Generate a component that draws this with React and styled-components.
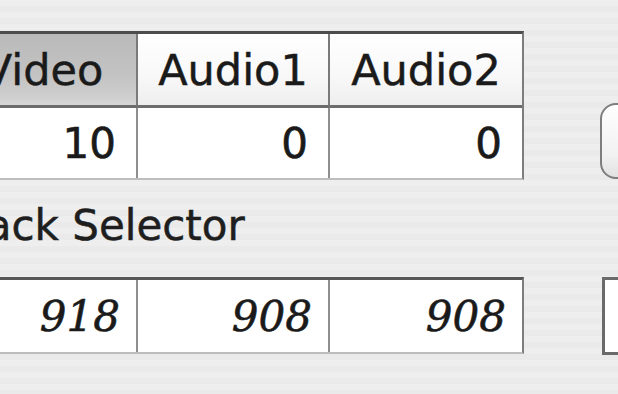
import React from "react";
import styled, { createGlobalStyle } from "styled-components";

const Global = createGlobalStyle`
  html, body { margin: 0; padding: 0; }
  body {
    width: 618px;
    height: 394px;
    overflow: hidden;
    font-family: "DejaVu Sans", "Noto Sans", sans-serif;
    background: repeating-linear-gradient(
      to bottom,
      #eeeeee 0px,
      #eeeeee 6px,
      #eaeaea 6px,
      #eaeaea 12px
    );
  }
`;

const Window = styled.div`
  display: flex;
  flex-direction: column;
  padding-top: 31px;
  width: 618px;
  height: 394px;
  box-sizing: border-box;
  overflow: hidden;
`;

const Row = styled.div`
  display: flex;
  align-items: ${(p) => p.$align || "flex-start"};
`;

const Table = styled.div`
  margin-left: -54px;
  display: grid;
  grid-template-columns: repeat(3, 192px);
  border-top: 3px solid ${(p) => p.$top || "#4d4d4d"};
  border-right: 2px solid #7d7d7d;
  border-bottom: 2px solid #bdbdbd;
  background: #fff;
`;

const HeaderCell = styled.div`
  height: 71px;
  display: flex;
  align-items: center;
  justify-content: center;
  padding-left: ${(p) => (p.$selected ? 4 : 0)}px;
  font-size: 43px;
  color: #1a1a1a;
  -webkit-text-stroke: 0.5px #1a1a1a;
  border-bottom: 3px solid #6c6c6c;
  border-right: ${(p) => (p.$last ? "none" : "2px solid #7a7a7a")};
  background: ${(p) =>
    p.$selected
      ? "linear-gradient(to bottom, #bababa 0%, #c3c3c3 60%, #cdcdcd 85%, #d6d6d6 100%)"
      : "linear-gradient(to bottom, #ffffff 0%, #f8f8f8 60%, #eeeeee 100%)"};
`;

const Cell = styled.div`
  height: ${(p) => p.$h || 70}px;
  display: flex;
  align-items: center;
  justify-content: flex-end;
  padding-right: ${(p) => (p.$italic ? 16 : 20)}px;
  font-size: 42px;
  font-style: ${(p) => (p.$italic ? "italic" : "normal")};
  font-family: ${(p) =>
    p.$italic
      ? '"DejaVu Serif", "Liberation Serif", serif'
      : '"DejaVu Sans", sans-serif'};
  color: #1a1a1a;
  -webkit-text-stroke: 0.6px #1a1a1a;
  background: #fff;
  border-right: ${(p) => (p.$last ? "none" : "2px solid #8e8e8e")};
`;

const Label = styled.div`
  margin-left: -51px;
  margin-top: 21px;
  height: 50px;
  line-height: 50px;
  font-size: 42px;
  color: #1e1e1e;
  -webkit-text-stroke: 0.5px #1e1e1e;
  white-space: nowrap;
`;

const PushButton = styled.div`
  margin-left: 76px;
  margin-bottom: 1px;
  width: 60px;
  height: 72px;
  border: 2px solid #7e7e7e;
  border-radius: 16px;
  background: linear-gradient(to bottom, #ffffff, #f1f1f1 70%, #e2e2e2);
  flex-shrink: 0;
`;

const Field = styled.div`
  margin-left: 78px;
  width: 60px;
  height: 72px;
  border: 3px solid #6a6a6a;
  background: #fff;
  flex-shrink: 0;
`;

const Spacer = styled.div`
  height: 26px;
`;

const headers = ["Video", "Audio1", "Audio2"];
const values = ["10", "0", "0"];
const sizes = ["918", "908", "908"];

export default function App() {
  return (
    <>
      <Global />
      <Window>
        <Row $align="flex-end">
          <Table>
            {headers.map((h, i) => (
              <HeaderCell key={h} $selected={i === 0} $last={i === 2}>
                {h}
              </HeaderCell>
            ))}
            {values.map((v, i) => (
              <Cell key={i} $last={i === 2}>
                {v}
              </Cell>
            ))}
          </Table>
          <PushButton />
        </Row>
        <Label>Track Selector</Label>
        <Spacer />
        <Row>
          <Table $top="#555">
            {sizes.map((v, i) => (
              <Cell key={i} $h={72} $italic $last={i === 2}>
                {v}
              </Cell>
            ))}
          </Table>
          <Field />
        </Row>
      </Window>
    </>
  );
}
